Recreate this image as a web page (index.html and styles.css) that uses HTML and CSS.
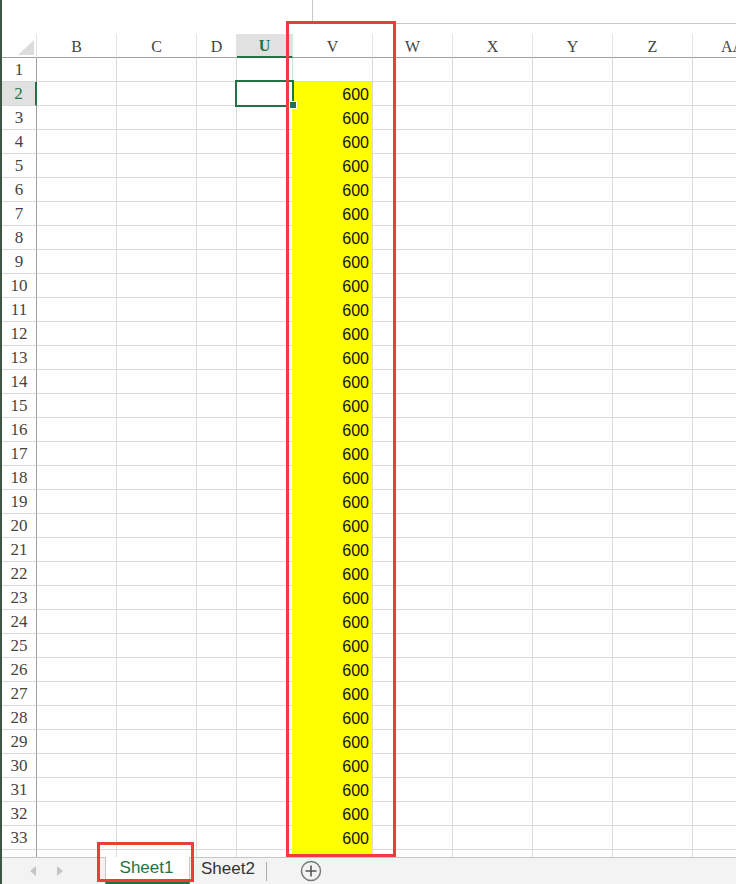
FILE: index.html
```html
<html>
    <head>
        <meta charset="utf-8">
        <link rel="stylesheet" href="styles.css">
        <script>
            window.addEventListener('DOMContentLoaded', main);
            const letters = ['B', 'C', 'D', 'U', 'V', 'W', 'X', 'Y', 'Z', 'AA'];
            const activeCol = 'U';
            const activeRow = 2;
            const lastRow = 33;

            function main() {
                const grid = document.querySelector('.grid');
                const corner = makeCell('corner');
                corner.innerHTML = '<svg width="16" height="15" viewBox="0 0 16 15"><polygon points="16,0 16,15 0,15" fill="#dcdcdc"/></svg>';
                grid.append(corner);

                letters.forEach((letter) => {
                    const head = makeCell('colHead', letter);
                    if (letter === activeCol) head.classList.add('current');
                    grid.append(head);
                });

                // one extra row peeks out above the sheet tabs
                for (let row = 1; row <= lastRow + 1; row++) {
                    const head = makeCell('rowHead', row <= lastRow ? row : '');
                    if (row === activeRow) head.classList.add('current');
                    grid.append(head);

                    letters.forEach((letter) => {
                        const cell = makeCell('cell');
                        if (letter === 'V' && row >= 2) {
                            cell.classList.add('fill');
                            if (row <= lastRow) cell.innerText = '600';
                        }
                        grid.append(cell);
                    });
                }
            }

            function makeCell(cls, text) {
                const div = document.createElement('div');
                div.className = cls;
                if (text !== undefined) div.innerText = text;
                return div;
            }
        </script>
    </head>
    <body>
        <div class="page">
            <div class="topbar">
                <div class="formula"></div>
            </div>

            <div class="sheet">
                <div class="grid"></div>
                <div class="selection"></div>
                <div class="fillHandle"></div>
            </div>

            <div class="tabs">
                <div class="tabNav">
                    <svg width="6" height="10" viewBox="0 0 6 10"><polygon points="6,0 6,10 0,5" fill="#c4c4c4"/></svg>
                    <svg width="6" height="10" viewBox="0 0 6 10"><polygon points="0,0 0,10 6,5" fill="#c4c4c4"/></svg>
                </div>
                <div class="tab active">Sheet1</div>
                <div class="tab">Sheet2</div>
                <span class="tabSep"></span>
                <svg class="addSheet" width="22" height="22" viewBox="0 0 22 22">
                    <circle cx="11" cy="11" r="9.5" fill="none" stroke="#7a7a7a" stroke-width="1.5"/>
                    <path d="M11 5.5v11M5.5 11h11" stroke="#555" stroke-width="1.6"/>
                </svg>
            </div>

            <div class="mark markColumn"></div>
            <div class="mark markTab"></div>
        </div>
    </body>
</html>
```

FILE: styles.css
```css
body {
    margin: 0;
    background: #fff;
}
.page {
    position: relative;
    width: 734px;
    height: 884px;
    border-left: 2px solid #3b5546;
    display: flex;
    flex-direction: column;
    overflow: hidden;
}

/* formula bar edge */
.topbar {
    height: 34px;
    flex: none;
}
.formula {
    margin-left: 310px;
    height: 24px;
    box-sizing: border-box;
    border-left: 1px solid #c8c8c8;
    border-bottom: 1px solid #c8c8c8;
}

/* grid */
.sheet {
    position: relative;
    height: 823px;
    flex: none;
    overflow: hidden;
}
.grid {
    display: grid;
    grid-template-columns: 35px 80px 80px 40px 56px repeat(6, 80px);
    grid-auto-rows: 24px;
}
.grid > div {
    box-sizing: border-box;
    border-right: 1px solid #d9d9d9;
    border-bottom: 1px solid #d9d9d9;
}
.corner {
    display: flex;
    justify-content: flex-end;
    align-items: flex-end;
    padding: 0 2px 2px 0;
    border-right-color: #e2e2e2 !important;
    border-bottom-color: #a0a0a0 !important;
}
.colHead, .rowHead {
    display: flex;
    align-items: center;
    justify-content: center;
    font-family: "Liberation Serif", "DejaVu Serif", serif;
    font-size: 16px;
    color: #444;
}
.colHead {
    padding-top: 2px;
    border-right-color: #e2e2e2 !important;
    border-bottom-color: #a0a0a0 !important;
}
.rowHead {
    font-size: 17px;
    padding-top: 1px;
    border-right-color: #a0a0a0 !important;
}
.colHead.current {
    background: #e1e1e1;
    color: #217346;
    font-weight: 700;
    border-bottom: 2px solid #217346 !important;
}
.rowHead.current {
    background: #e1e1e1;
    color: #217346;
    border-right: 2px solid #217346 !important;
}
.cell.fill {
    background: #ffff00;
    border-bottom-color: #ffff00;
    box-shadow: -1px 0 0 #ffff00;
    display: flex;
    align-items: center;
    justify-content: flex-end;
    padding: 2px 3px 0 0;
    font-family: "Liberation Sans", Arial, sans-serif;
    font-size: 16px;
    color: #111;
}
.selection {
    position: absolute;
    left: 233px;
    top: 46px;
    width: 59px;
    height: 27px;
    box-sizing: border-box;
    border: 2px solid #217346;
}
.fillHandle {
    position: absolute;
    left: 287px;
    top: 67px;
    width: 8px;
    height: 8px;
    box-sizing: border-box;
    background: #217346;
    border: 1px solid #fff;
}

/* sheet tabs */
.tabs {
    flex: 1;
    display: flex;
    align-items: stretch;
    background: #f3f3f3;
    border-top: 1px solid #c6c6c6;
    font-family: "Liberation Sans", Arial, sans-serif;
    font-size: 17px;
}
.tabNav {
    width: 103px;
    display: flex;
    align-items: center;
    gap: 21px;
    padding-left: 28px;
    box-sizing: border-box;
}
.tab {
    display: flex;
    align-items: center;
    padding: 0 11px 4px;
    color: #333;
}
.tab.active {
    width: 85px;
    box-sizing: border-box;
    justify-content: center;
    margin-top: -1px;
    padding: 0 2px 2px 0;
    background: #fff;
    color: #217346;
    border-left: 1px solid #c6c6c6;
    border-right: 1px solid #c6c6c6;
    border-bottom: 3px solid #217346;
}
.tabSep {
    width: 1px;
    background: #aaa;
    margin: 4px 0 3px 0;
}
.addSheet {
    align-self: center;
    margin-left: 33px;
}

/* red annotation boxes */
.mark {
    position: absolute;
    box-sizing: border-box;
    border: 3px solid #ee3b3b;
    pointer-events: none;
}
.markColumn {
    left: 284px;
    top: 21px;
    width: 110px;
    height: 836px;
}
.markTab {
    left: 95px;
    top: 842px;
    width: 97px;
    height: 40px;
}
```
